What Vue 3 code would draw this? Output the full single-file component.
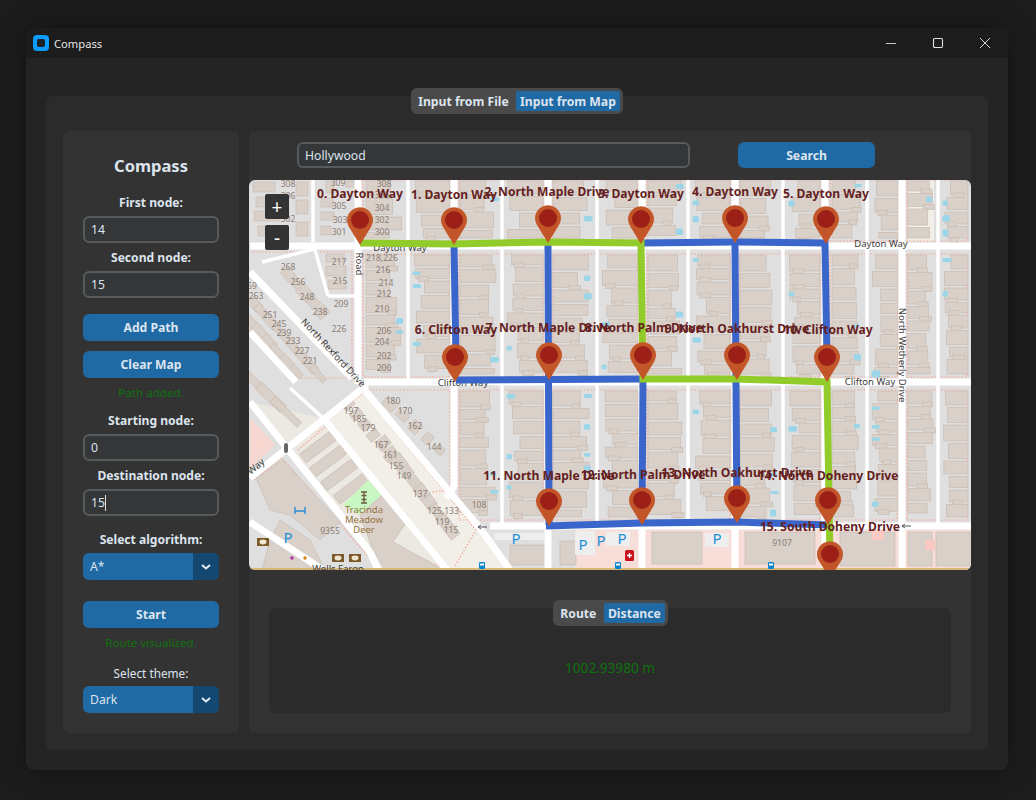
<script setup>
function rng(seed) {
  let s = seed
  return () => {
    s = (s * 16807) % 2147483647
    return (s % 10000) / 10000
  }
}

const alleys = [502, 597, 688, 783, 867, 938]
const thick = [358, 454, 548, 642, 735, 825, 902, 972]
const rows = [[178, 241], [252, 377], [388, 520]]

const strips = [
  [366, 404], [412, 450], [460, 498], [506, 543], [553, 592], [601, 638], [648, 684],
  [692, 730], [740, 778], [788, 820], [832, 862], [871, 898], [908, 934], [942, 968]
]

const r = rng(4711)
const houses = []
const pools = []
strips.forEach(([a, b], idx) => {
  rows.forEach(([top, bottom], rowIdx) => {
    if (rowIdx === 2 && a < 460) return
    let y = top + 3
    while (y < bottom - 8) {
      const h = 10 + Math.floor(r() * 7)
      const w = (b - a) * (0.62 + r() * 0.34)
      const right = idx % 2 === 1
      const x = right ? b - w : a
      houses.push({ x, y, w, h: Math.min(h, bottom - y - 3) })
      if (r() > 0.55) {
        houses.push({ x: right ? x + 3 : x + w - 9, y: y + h - 2, w: 7 + r() * 5, h: 5 })
      }
      if (r() > 0.78) {
        pools.push({ x: right ? a + 0.5 : b - 8, y: y + 3, w: 5 + r() * 4, h: 3 + r() * 4 })
      }
      y += h + 2.5
    }
  })
})

const outlines = []
for (let i = 0; i < thick.length - 1; i++) {
  rows.forEach(([top, bottom], rowIdx) => {
    if (rowIdx === 2 && i === 0) return
    outlines.push({ x: thick[i] + 5, y: top + 2, w: thick[i + 1] - thick[i] - 10, h: bottom - top - 2 })
  })
}

function along(x0, y0, x1, y1, count, w, h, seed) {
  const q = rng(seed)
  const angle = (Math.atan2(y1 - y0, x1 - x0) * 180) / Math.PI
  return Array.from({ length: count }, (_, i) => {
    const t = i / Math.max(count - 1, 1)
    const ww = w * (0.7 + q() * 0.5)
    const hh = h * (0.7 + q() * 0.5)
    const cx = x0 + (x1 - x0) * t
    const cy = y0 + (y1 - y0) * t
    return { key: seed + '-' + i, x: -ww / 2, y: -hh / 2, w: ww, h: hh, transform: `translate(${cx} ${cy}) rotate(${angle})` }
  })
}

const diagHouses = [
  ...along(288, 274, 322, 312, 5, 13, 11, 11),
  ...along(255, 304, 318, 374, 9, 17, 8, 12),
  ...along(251, 322, 296, 372, 6, 17, 8, 13),
  ...along(348, 404, 390, 456, 6, 9, 10, 14),
  ...along(384, 442, 452, 532, 10, 13, 11, 15),
  ...along(390, 404, 440, 450, 5, 12, 10, 16),
  ...along(256, 383, 286, 412, 3, 32, 9, 17)
]

const longStrips = [
  { key: 1, transform: 'translate(318 447) rotate(-37)', w: 38, h: 11 },
  { key: 2, transform: 'translate(328 461) rotate(-37)', w: 38, h: 11 },
  { key: 3, transform: 'translate(339 475) rotate(-37)', w: 38, h: 11 },
  { key: 4, transform: 'translate(351 489) rotate(-37)', w: 36, h: 11 }
]

const topLeftHouses = [
  [326, 181, 8, 12], [346, 181, 10, 6], [321, 198, 12, 9], [321, 212, 13, 8], [321, 226, 10, 9],
  [253, 182, 22, 10], [256, 197, 24, 10], [254, 211, 25, 10], [258, 226, 20, 10], [296, 182, 12, 14],
  [296, 200, 12, 14], [296, 222, 12, 14], [326, 254, 18, 8], [326, 266, 20, 10], [328, 280, 18, 9]
]

const numbers = [
  ['308', 288, 184], ['306', 288, 196], ['302', 288, 219], ['309', 338, 183], ['305', 339, 206], ['303', 340, 220], ['301', 339, 232],
  ['308', 384, 184], ['306', 382, 195], ['304', 382, 208], ['302', 382, 220], ['300', 382, 232], ['218,226', 382, 258],
  ['216', 383, 270], ['214', 386, 283], ['212', 384, 294], ['210', 382, 309], ['206', 384, 331], ['204', 382, 342], ['202', 384, 356], ['200', 384, 368],
  ['268', 288, 267], ['256', 298, 282], ['248', 307, 297], ['238', 320, 312], ['209', 341, 304], ['217', 339, 262], ['215', 340, 281], ['226', 339, 329],
  ['263', 256, 296], ['251', 270, 315], ['245', 279, 324], ['239', 284, 333], ['233', 293, 341], ['227', 302, 351], ['221', 310, 361], ['69', 252, 286],
  ['197', 351, 411], ['185', 359, 419], ['179', 368, 428], ['167', 381, 445], ['161', 390, 455], ['155', 396, 466], ['149', 404, 476], ['137', 420, 494],
  ['125,133', 443, 511], ['119', 442, 522], ['115', 451, 530], ['180', 393, 401], ['170', 405, 411], ['162', 415, 426], ['144', 434, 447], ['108', 479, 505],
  ['9355', 330, 531], ['9107', 782, 543]
]

const parking = [[516, 538], [583, 544], [601, 540], [622, 538], [717, 538], [288, 537]]
const busStops = [482, 618, 771]
const banks = [[263, 542], [338, 558], [355, 558]]

const greenRoute = '360,243 454,244 548,242 641,243 643,379 737,379 827,382 830,560'
const blueRoutes = [
  '454,244 456,360',
  '548,242 549,525',
  '641,243 735,242 825,243 827,360',
  '735,242 737,525',
  '456,380 643,379',
  '643,379 642,522',
  '546,526 642,523 737,522 828,525'
]

const pins = [
  [360, 245], [454, 245], [548, 243], [641, 244], [735, 243], [826, 244],
  [455, 382], [549, 380], [643, 380], [737, 380], [827, 382],
  [549, 526], [642, 525], [737, 523], [828, 525], [830, 579]
]

const labels = [
  ['0. Dayton Way', 360, 198], ['1. Dayton Way', 454, 199], ['2. North Maple Drive', 547, 196], ['3. Dayton Way', 641, 198],
  ['4. Dayton Way', 735, 196], ['5. Dayton Way', 826, 198], ['6. Clifton Way', 456, 334], ['7. North Maple Drive', 548, 332],
  ['8. North Palm Drive', 644, 332], ['9. North Oakhurst Drive', 737, 333], ['10. Clifton Way', 828, 334],
  ['11. North Maple Drive', 549, 480], ['12. North Palm Drive', 643, 479], ['13. North Oakhurst Drive', 737, 477],
  ['14. North Doheny Drive', 828, 480], ['15. South Doheny Drive', 830, 531]
]
</script>

<template>
  <div class="screen">
    <div class="window">
      <header class="titlebar">
        <span class="app-icon"><span class="app-icon-hole"></span></span>
        <span class="app-title">Compass</span>
        <div class="window-buttons">
          <svg width="12" height="12" viewBox="0 0 12 12"><path d="M1 6.5h10" stroke="#c8c8c8" stroke-width="1.2" /></svg>
          <svg width="12" height="12" viewBox="0 0 12 12"><rect x="1.5" y="1.5" width="9" height="9" rx="1.2" fill="none" stroke="#e4e4e4" stroke-width="1.1" /></svg>
          <svg width="12" height="12" viewBox="0 0 12 12"><path d="M1 1l10 10M11 1L1 11" stroke="#d8d8d8" stroke-width="1" /></svg>
        </div>
      </header>

      <main class="main">
        <section class="tabview">
          <div class="segmented top-tabs">
            <span class="seg">Input from File</span>
            <span class="seg active">Input from Map</span>
          </div>

          <aside class="sidebar">
            <h1 class="brand">Compass</h1>
            <label class="label first">First node:</label>
            <div class="input">14</div>
            <label class="label">Second node:</label>
            <div class="input">15</div>
            <button class="btn add">Add Path</button>
            <button class="btn clear">Clear Map</button>
            <p class="status">Path added.</p>
            <label class="label starting">Starting node:</label>
            <div class="input">0</div>
            <label class="label">Destination node:</label>
            <div class="input">15<span class="caret"></span></div>
            <label class="label algo">Select algorithm:</label>
            <div class="select">
              <span class="select-value">A*</span>
              <span class="select-arrow">
                <svg width="12" height="8" viewBox="0 0 12 8"><path d="M2 2l4 3.5L10 2" fill="none" stroke="#e4ecf4" stroke-width="2" /></svg>
              </span>
            </div>
            <button class="btn start">Start</button>
            <p class="status">Route visualized.</p>
            <label class="label theme">Select theme:</label>
            <div class="select">
              <span class="select-value">Dark</span>
              <span class="select-arrow">
                <svg width="12" height="8" viewBox="0 0 12 8"><path d="M2 2l4 3.5L10 2" fill="none" stroke="#e4ecf4" stroke-width="2" /></svg>
              </span>
            </div>
          </aside>

          <div class="content">
            <div class="search-row">
              <div class="input search-input">Hollywood</div>
              <button class="btn search-btn">Search</button>
            </div>

            <div class="map">
              <svg class="map-svg" viewBox="249 180 722 390" width="722" height="390">
                <rect x="249" y="180" width="722" height="390" fill="#e0dfdf" />
                <polygon points="363,388 483,532 510,570 447,570 323,418" fill="#f2efe9" />
                <polygon points="250,402 323,418 447,570 378,570 370,552" fill="#ece8e2" />
                <polygon points="250,418 275,445 250,468" fill="#f6d6cf" />
                <polygon points="575,530 972,530 972,570 575,570" fill="#f8ded9" />
                <rect x="908" y="180" width="26" height="61" fill="#f2efe9" />

                <rect v-for="(o, i) in outlines" :key="'o' + i" :x="o.x" :y="o.y" :width="o.w" :height="o.h" class="outline" />
                <polyline points="252,252 352,252 352,378 300,378" class="outline" />
                <polyline points="369,390 450,390 450,490 432,492" class="outline" />
                <polyline points="335,412 364,393 476,530 455,566" class="outline" />
                <polyline points="298,450 326,426 440,566 380,548" class="outline" />
                <polyline points="254,480 282,458 368,556" class="outline" />
                <rect v-for="(h, i) in houses" :key="'h' + i" :x="h.x" :y="h.y" :width="h.w" :height="h.h" class="house" />
                <rect v-for="(p, i) in pools" :key="'p' + i" :x="p.x" :y="p.y" :width="p.w" :height="p.h" rx="1.5" class="pool" />
                <rect v-for="(h, i) in topLeftHouses" :key="'t' + i" :x="h[0]" :y="h[1]" :width="h[2]" :height="h[3]" class="house" />
                <rect v-for="h in diagHouses" :key="h.key" :x="h.x" :y="h.y" :width="h.w" :height="h.h" :transform="h.transform" class="house" />
                <rect v-for="h in longStrips" :key="'l' + h.key" :x="-h.w / 2" :y="-h.h / 2" :width="h.w" :height="h.h" :transform="h.transform" class="house" />

                <polygon points="343,505 368,480 382,495 360,515" fill="#c9f7c4" />
                <polygon points="360,515 382,495 407,521 393,542 430,562 442,570 385,570 372,548" class="house" />
                <polygon points="256,478 283,460 340,522 320,540 290,515 270,510" class="house" />
                <polygon points="280,520 310,540 325,570 262,570 270,540" class="house" />
                <rect x="494" y="533" width="50" height="7" fill="#efeeee" />
                <rect x="510" y="545" width="36" height="20" class="house" />
                <rect x="560" y="541" width="16" height="24" class="house" />
                <rect x="652" y="532" width="50" height="32" class="house" />
                <rect x="745" y="532" width="70" height="32" class="house" />
                <rect x="840" y="532" width="55" height="34" class="house" />
                <rect x="908" y="532" width="24" height="34" class="house" />
                <rect x="936" y="532" width="34" height="34" class="house" />
                <rect x="575" y="531" width="20" height="24" fill="#efeeee" />
                <rect x="606" y="532" width="24" height="14" fill="#efeeee" />
                <rect x="705" y="533" width="24" height="14" fill="#efeeee" />
                <rect x="872" y="530" width="12" height="10" fill="#fbc9c2" />
                <rect x="925" y="540" width="10" height="10" fill="#fbc9c2" />

                <g class="road-thin">
                  <line v-for="x in alleys" :key="'s' + x" :x1="x" y1="180" :x2="x" y2="526" />
                  <line x1="408" y1="180" x2="408" y2="382" />
                  <line x1="313" y1="180" x2="313" y2="242" />
                  <line x1="315" y1="250" x2="328" y2="296" />
                  <line x1="328" y1="296" x2="358" y2="296" />
                  <line x1="262" y1="262" x2="315" y2="249" />
                  <line x1="290" y1="388" x2="323" y2="418" />
                </g>
                <g class="road">
                  <line x1="250" y1="246" x2="972" y2="246" />
                  <line x1="364" y1="382" x2="972" y2="382" />
                  <line x1="490" y1="526" x2="972" y2="526" />
                  <line x1="358" y1="180" x2="358" y2="384" />
                  <line x1="454" y1="180" x2="454" y2="488" />
                  <line x1="454" y1="487" x2="446" y2="498" />
                  <line x1="548" y1="180" x2="548" y2="570" />
                  <line x1="642" y1="180" x2="642" y2="570" />
                  <line x1="735" y1="180" x2="735" y2="570" />
                  <line x1="825" y1="180" x2="825" y2="570" />
                  <line x1="902" y1="180" x2="902" y2="570" />
                  <line x1="250" y1="272" x2="352" y2="378" />
                  <line x1="250" y1="332" x2="296" y2="382" />
                  <line x1="250" y1="402" x2="370" y2="552" />
                  <line x1="370" y1="552" x2="378" y2="570" />
                  <line x1="323" y1="418" x2="447" y2="570" />
                  <line x1="363" y1="388" x2="483" y2="532" />
                  <line x1="483" y1="532" x2="510" y2="570" />
                  <line x1="367" y1="385" x2="250" y2="478" />
                  <line x1="250" y1="522" x2="323" y2="570" />
                </g>
                <rect x="249" y="568" width="722" height="2" fill="#d8b878" />

                <text v-for="(n, i) in numbers" :key="'n' + i" :x="n[1]" :y="n[2] + 3" class="house-number">{{ n[0] }}</text>

                <text x="881" y="247" class="street">Dayton Way</text>
                <text x="400" y="251" class="street">Dayton Way</text>
                <text x="463" y="386" class="street">Clifton Way</text>
                <text x="870" y="385" class="street">Clifton Way</text>
                <text class="street" transform="translate(331 355) rotate(47)">North Rexford Drive</text>
                <text class="street" transform="translate(899 355) rotate(90)">North Wetherly Drive</text>
                <text class="street" transform="translate(356 264) rotate(90)">Road</text>
                <text class="street" transform="translate(258 469) rotate(-40)">Way</text>
                <text class="street" x="338" y="572">Wells Fargo</text>
                <g class="park-name">
                  <text x="364" y="513">Tracinda</text>
                  <text x="364" y="523">Meadow</text>
                  <text x="364" y="533">Deer</text>
                </g>
                <path d="M361 492h6M361 503h6M364 492v11M361.5 495.5h5M361.5 499.5h5" fill="none" stroke="#6f5a3a" stroke-width="1.3" />

                <text v-for="(p, i) in parking" :key="'pk' + i" :x="p[0]" :y="p[1] + 6" class="parking">P</text>
                <g v-for="x in busStops" :key="'b' + x">
                  <rect :x="x - 3" y="562" width="6" height="7" rx="1.2" fill="#0a84d0" />
                  <rect :x="x - 2" y="563.5" width="4" height="2" fill="#fff" />
                </g>
                <g v-for="(b, i) in banks" :key="'bk' + i">
                  <rect :x="b[0] - 6" :y="b[1] - 4" width="12" height="8" fill="#7a5a28" />
                  <ellipse :cx="b[0]" :cy="b[1]" rx="3.5" ry="2.4" fill="#f1e6cf" />
                </g>
                <rect x="625" y="550" width="9" height="11" rx="1.5" fill="#c9121c" />
                <path d="M629.5 553v5M627 555.5h5" stroke="#fff" stroke-width="1.4" />
                <path d="M295 507v7M295 511h10v3M305 507v7" fill="none" stroke="#2a8fd6" stroke-width="1.4" />
                <rect x="284" y="443" width="4" height="10" rx="2" fill="#666" />
                <path d="M478 527h9M478 527l3-2M478 527l3 2" stroke="#444" stroke-width="0.9" fill="none" />
                <path d="M902 526h9M902 526l3-2M902 526l3 2" stroke="#444" stroke-width="0.9" fill="none" />
                <circle cx="292" cy="558" r="1.7" fill="#b02ca8" />
                <circle cx="305" cy="558" r="1.7" fill="#d98218" />

                <polyline v-for="(b, i) in blueRoutes" :key="'r' + i" :points="b" class="route blue" />
                <polyline :points="greenRoute" class="route green" />

                <g v-for="(p, i) in pins" :key="'pin' + i" :transform="`translate(${p[0]} ${p[1]})`">
                  <path d="M0 0L-11.3-18.4A13 13 0 1 1 11.3-18.4Z" fill="#c25629" />
                  <circle cx="0" cy="-25" r="9" fill="#9c2018" />
                </g>

                <text v-for="(l, i) in labels" :key="'lb' + i" :x="l[1]" :y="l[2]" class="pin-label">{{ l[0] }}</text>
              </svg>

              <div class="zoom-controls">
                <button class="zoom-btn">+</button>
                <button class="zoom-btn">-</button>
              </div>
            </div>

            <div class="result">
              <div class="segmented result-tabs">
                <span class="seg">Route</span>
                <span class="seg active">Distance</span>
              </div>
              <p class="distance">1002.93980 m</p>
            </div>
          </div>
        </section>
      </main>
    </div>
  </div>
</template>

<style>
html,
body {
  margin: 0;
  background: #1c1c1c;
}
</style>

<style scoped>
.screen {
  box-sizing: border-box;
  width: 1036px;
  height: 800px;
  padding: 28px 28px 30px 26px;
  background: #1c1c1c;
  font-family: "Noto Sans", sans-serif;
  overflow: hidden;
}
.window {
  height: 742px;
  display: flex;
  flex-direction: column;
  background: #242424;
  border-radius: 8px;
  box-shadow: 0 0 26px rgba(0, 0, 0, 0.35);
  overflow: hidden;
}
.titlebar {
  height: 30px;
  flex: none;
  display: flex;
  align-items: center;
  padding-left: 7px;
  background: #1c1c1c;
}
.app-icon {
  width: 16px;
  height: 16px;
  border-radius: 4px;
  background: #0a9bff;
  display: flex;
  align-items: center;
  justify-content: center;
}
.app-icon-hole {
  width: 8px;
  height: 8px;
  border-radius: 2px;
  background: #1c2226;
}
.app-title {
  margin-left: 5px;
  font-size: 11.2px;
  color: #e6e6e6;
}
.window-buttons {
  margin-left: auto;
  display: flex;
  gap: 35px;
  padding-right: 17px;
}
.main {
  flex: 1;
  padding: 38px 20px 20px;
  min-height: 0;
}
.tabview {
  position: relative;
  height: 100%;
  box-sizing: border-box;
  display: flex;
  gap: 10px;
  padding: 35px 17px 17px;
  background: #2b2b2b;
  border-radius: 6px;
}
.segmented {
  position: absolute;
  display: flex;
  gap: 3px;
  height: 26px;
  box-sizing: border-box;
  padding: 3px;
  background: #4a4a4a;
  border-radius: 6px;
  font-size: 12.2px;
  font-weight: 700;
  color: #dce4ee;
}
.top-tabs {
  top: -8px;
  left: 365px;
  width: 212px;
}
.result-tabs {
  top: -8px;
  left: 284px;
  width: 115px;
}
.seg {
  display: flex;
  align-items: center;
  justify-content: center;
  flex: 1 1 auto;
  padding: 0 3px;
  border-radius: 3px;
  white-space: nowrap;
}
.seg.active {
  background: #1f6aa5;
}
.sidebar {
  width: 176px;
  flex: none;
  box-sizing: border-box;
  padding: 24px 20px 0;
  background: #333333;
  border-radius: 6px;
  display: flex;
  flex-direction: column;
}
.brand {
  margin: 0;
  height: 22px;
  line-height: 22px;
  font-size: 16.5px;
  font-weight: 700;
  text-align: center;
  color: #dce4ee;
}
.label {
  margin-top: 5px;
  height: 20px;
  line-height: 20px;
  font-size: 12.1px;
  font-weight: 700;
  text-align: center;
  color: #dce4ee;
}
.label.first {
  margin-top: 16px;
}
.label.starting {
  margin-top: 8px;
}
.label.algo {
  margin-top: 14px;
}
.label.theme {
  margin-top: 10px;
  font-size: 11.8px;
  font-weight: 400;
}
.input {
  box-sizing: border-box;
  height: 27px;
  margin-top: 3px;
  padding: 0 6px;
  display: flex;
  align-items: center;
  background: #343638;
  border: 2px solid #565b5e;
  border-radius: 6px;
  font-size: 12.2px;
  color: #dce4ee;
}
.caret {
  display: inline-block;
  width: 1px;
  height: 16px;
  background: #dce4ee;
}
.btn {
  display: block;
  box-sizing: border-box;
  height: 27px;
  padding: 0;
  border: none;
  border-radius: 6px;
  background: #1f6aa5;
  color: #dce4ee;
  font-family: inherit;
  font-size: 12.2px;
  font-weight: 700;
}
.btn.add {
  margin-top: 16px;
}
.btn.clear {
  margin-top: 10px;
}
.btn.start {
  margin-top: 21px;
}
.status {
  margin: 5px 0 0;
  height: 20px;
  line-height: 20px;
  font-size: 11.6px;
  text-align: center;
  color: #0f720f;
}
.select {
  height: 27px;
  margin-top: 3px;
  display: flex;
  border-radius: 6px;
  overflow: hidden;
  background: #1f6aa5;
  font-size: 12.2px;
  color: #dce4ee;
}
.select-value {
  flex: 1;
  padding-left: 7px;
  line-height: 28px;
}
.select-arrow {
  width: 26px;
  display: flex;
  align-items: center;
  justify-content: center;
  background: #144870;
}
.content {
  flex: 1;
  min-width: 0;
  background: #333333;
  border-radius: 6px;
  display: flex;
  flex-direction: column;
}
.search-row {
  display: flex;
  gap: 48px;
  padding: 11px 0 0 48px;
}
.search-row .input,
.search-btn {
  height: 26px;
  margin-top: 0;
}
.search-input {
  width: 393px;
}
.search-btn {
  width: 137px;
}
.map {
  position: relative;
  height: 390px;
  margin-top: 12px;
  border-radius: 6px;
  overflow: hidden;
}
.map-svg {
  display: block;
}
.outline {
  fill: none;
  stroke: #f6a596;
  stroke-width: 1.2;
  stroke-dasharray: 1.6 1.8;
}
.house {
  fill: #d9d0c9;
  stroke: #c9bdb3;
  stroke-width: 0.7;
}
.pool {
  fill: #9bd5e8;
}
.road line {
  stroke: #fff;
  stroke-width: 7;
}
.road-thin line {
  stroke: #fff;
  stroke-width: 3.5;
}
.house-number {
  font-family: "Noto Sans", sans-serif;
  font-size: 8.6px;
  fill: #8a7d74;
  text-anchor: middle;
}
.street {
  font-family: "Noto Sans", sans-serif;
  font-size: 9.5px;
  fill: #3c3c3c;
  text-anchor: middle;
}
.park-name text {
  font-family: "Noto Sans", sans-serif;
  font-size: 9.5px;
  fill: #96743f;
  text-anchor: middle;
}
.parking {
  font-family: "Noto Sans", sans-serif;
  font-size: 15px;
  fill: #1b8fd8;
  text-anchor: middle;
}
.route {
  fill: none;
  stroke-width: 7;
  stroke-linejoin: miter;
}
.route.green {
  stroke: #92cc2a;
}
.route.blue {
  stroke: #3a66cc;
}
.pin-label {
  font-family: "Noto Sans", sans-serif;
  font-size: 12.1px;
  font-weight: 700;
  fill: #651f1f;
  text-anchor: middle;
}
.zoom-controls {
  position: absolute;
  top: 14px;
  left: 16px;
  display: flex;
  flex-direction: column;
  gap: 6px;
}
.zoom-btn {
  width: 24px;
  height: 25px;
  padding: 0;
  border: none;
  border-radius: 2px;
  background: #333333;
  color: #fff;
  font-family: "Noto Sans", sans-serif;
  font-size: 19px;
  font-weight: 400;
  line-height: 24px;
}
.result {
  position: relative;
  height: 105px;
  margin: 38px 20px 0;
  background: #2b2b2b;
  border-radius: 6px;
  display: flex;
  align-items: center;
  justify-content: center;
}
.distance {
  margin: 14px 0 0;
  font-size: 13.6px;
  color: #0f720f;
}
</style>
